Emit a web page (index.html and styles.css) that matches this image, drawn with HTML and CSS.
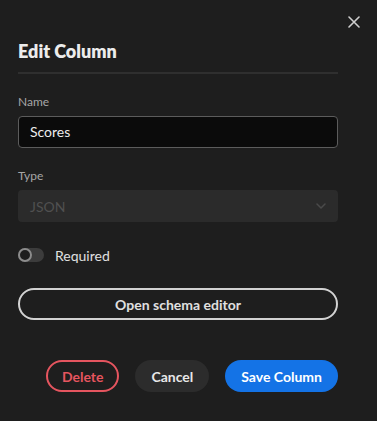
FILE: index.html
```html
<!DOCTYPE html>
<html lang="en">
<head>
  <meta charset="UTF-8" />
  <title>Edit Column</title>
  <link rel="stylesheet" href="styles.css">
</head>
<body>
  <div class="dialog">
    <button class="close-btn" aria-label="Close">
      <svg width="12" height="12" viewBox="0 0 12 12">
        <path d="M1 1 L11 11 M11 1 L1 11" stroke="#cfcfcf" stroke-width="1.6" stroke-linecap="round" fill="none"/>
      </svg>
    </button>

    <h2 class="dialog-title">Edit Column</h2>
    <div class="divider"></div>

    <div class="field">
      <label class="field-label">Name</label>
      <div class="text-input">Scores</div>
    </div>

    <div class="field">
      <label class="field-label">Type</label>
      <div class="select disabled">
        <span>JSON</span>
        <svg width="10" height="6" viewBox="0 0 10 6">
          <path d="M1 1 L5 5 L9 1" stroke="#4a4a4a" stroke-width="1.5" fill="none" stroke-linecap="round" stroke-linejoin="round"/>
        </svg>
      </div>
    </div>

    <div class="switch-row">
      <span class="switch"><span class="knob"></span></span>
      <span class="switch-label">Required</span>
    </div>

    <button class="btn-outline">Open schema editor</button>

    <div class="footer">
      <button class="btn btn-delete">Delete</button>
      <button class="btn btn-cancel">Cancel</button>
      <button class="btn btn-save">Save Column</button>
    </div>
  </div>
</body>
</html>
```

FILE: styles.css
```css
body {
  margin: 0;
  background-color: #1e1e1e;
  font-family: Lato, "Noto Sans", sans-serif;
  color: #e3e3e3;
}

.dialog {
  position: relative;
  padding: 40px 39px 0 18px;
}

.close-btn {
  position: absolute;
  top: 16px;
  right: 17px;
  padding: 0;
  border: none;
  background: none;
  width: 12px;
  height: 12px;
  display: flex;
}

.dialog-title {
  margin: 0;
  font-size: 18px;
  line-height: 22px;
  font-weight: 800;
  color: #ececec;
}

.divider {
  height: 2px;
  background-color: #2f2f2f;
  margin-top: 10px;
  margin-bottom: 20px;
}

.field {
  display: flex;
  flex-direction: column;
  margin-bottom: 20px;
}

.field-label {
  font-size: 12px;
  line-height: 16px;
  color: #a6a6a6;
  margin-bottom: 6px;
}

.text-input {
  height: 30px;
  border: 1px solid #5c5c5c;
  border-radius: 4px;
  background-color: #0b0b0b;
  padding: 0 11px;
  font-size: 14px;
  line-height: 30px;
  color: #ededed;
}

.select {
  height: 32px;
  border-radius: 4px;
  background-color: #2b2b2b;
  padding: 0 12px 0 12px;
  display: flex;
  align-items: center;
  justify-content: space-between;
  font-size: 14px;
  color: #505050;
}

.switch-row {
  display: flex;
  align-items: center;
  gap: 11px;
  margin-top: 22px;
  height: 22px;
}

.switch {
  width: 26px;
  height: 14px;
  border-radius: 7px;
  background-color: #3c3c3c;
  display: flex;
  align-items: center;
}

.knob {
  width: 10px;
  height: 10px;
  border: 2px solid #8c8c8c;
  border-radius: 50%;
  background-color: #1e1e1e;
}

.switch-label {
  font-size: 14px;
  color: #e0e0e0;
}

.btn-outline {
  display: block;
  width: 100%;
  height: 32px;
  margin-top: 22px;
  border: 2px solid #d2d2d2;
  border-radius: 16px;
  background: none;
  font-family: inherit;
  font-size: 14px;
  font-weight: 700;
  color: #e0e0e0;
}

.footer {
  display: flex;
  justify-content: flex-end;
  gap: 16px;
  margin-top: 40px;
}

.btn {
  height: 32px;
  border-radius: 16px;
  font-family: inherit;
  font-size: 14px;
  font-weight: 700;
  padding: 0 14px;
  border: 2px solid transparent;
}

.btn-delete {
  border-color: #e5555f;
  color: #e5555f;
  background: none;
}

.btn-cancel {
  background-color: #2c2c2c;
  color: #e8e8e8;
}

.btn-save {
  background-color: #1473e6;
  color: #ffffff;
}
```
